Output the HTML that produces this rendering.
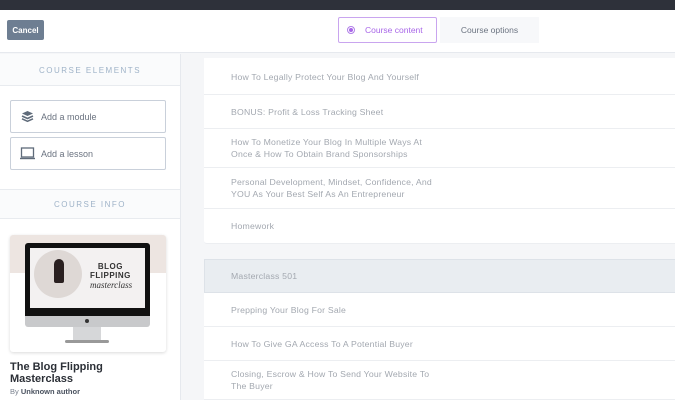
<!DOCTYPE html>
<html><head><meta charset="utf-8"><style>
*{box-sizing:border-box;margin:0;padding:0}
body{width:675px;height:400px;overflow:hidden;font-family:"Liberation Sans",sans-serif;background:#f5f6f8;position:relative}
.a{position:absolute}
.row{position:absolute;left:204px;width:471px;background:#fff;border-bottom:1px solid #eceef1;font-size:8.7px;color:#a3a8b0;padding-left:27px;display:flex;align-items:center;line-height:12px;letter-spacing:.2px}
.btn{position:absolute;left:10px;width:156px;height:33px;border:1px solid #c9d0da;border-radius:2px;background:#fff;font-size:9px;color:#6b7380;display:flex;align-items:center;padding-left:30px}
.hd{position:absolute;left:0;width:180px;font-size:8px;letter-spacing:1.5px;color:#9fb3c8;text-align:center}
</style></head><body>
<div class="a" style="left:0;top:0;width:675px;height:10px;background:#2e313a"></div>
<div class="a" style="left:0;top:10px;width:675px;height:43px;background:#fff;border-bottom:1px solid #e6e9ee"></div>
<div class="a" style="left:7px;top:20px;width:37px;height:20px;background:#6e7e92;border-radius:2px;color:#fff;font-size:8px;font-weight:bold;display:flex;align-items:center;justify-content:center">Cancel</div>
<div class="a" style="left:338px;top:17px;width:99px;height:26px;border:1px solid #c9a5ef;border-radius:2px;color:#a866e8;font-size:8.5px;display:flex;align-items:center;padding-left:26px">Course content</div>
<div class="a" style="left:347px;top:26px;width:8px;height:8px;border:1px solid #b07ee8;border-radius:50%"></div>
<div class="a" style="left:349px;top:28px;width:4px;height:4px;background:#a866e8;border-radius:50%"></div>
<div class="a" style="left:440px;top:17px;width:99px;height:26px;background:#f7f8fa;color:#6b7380;font-size:8.5px;display:flex;align-items:center;justify-content:center">Course options</div>

<div class="a" style="left:0;top:54px;width:181px;height:346px;background:#fff;border-right:1px solid #e6e9ee"></div>
<div class="a" style="left:0;top:54px;width:180px;height:32px;background:#fafbfc;border-bottom:1px solid #e8ebef"></div>
<div class="hd" style="top:66px">COURSE ELEMENTS</div>
<div class="btn" style="top:100px">Add a module</div>
<svg class="a" style="left:21px;top:110px" width="13" height="13" viewBox="0 0 13 13"><path d="M6.5 1L12 3.5 6.5 6 1 3.5z" fill="#5f6b7a"/><path d="M1 6l5.5 2.5L12 6" stroke="#5f6b7a" stroke-width="1.6" fill="none"/><path d="M1 8.8l5.5 2.5L12 8.8" stroke="#5f6b7a" stroke-width="1.6" fill="none"/></svg>
<div class="btn" style="top:137px">Add a lesson</div>
<svg class="a" style="left:20px;top:147px" width="15" height="13" viewBox="0 0 15 13"><rect x="1.5" y="1" width="12" height="9" fill="none" stroke="#5f6b7a" stroke-width="1.3"/><path d="M0 11.5h15" stroke="#5f6b7a" stroke-width="1.4"/></svg>
<div class="a" style="left:0;top:189px;width:180px;height:30px;background:#fafbfc;border-top:1px solid #e8ebef;border-bottom:1px solid #e8ebef"></div>
<div class="hd" style="top:200px">COURSE INFO</div>

<div class="a" style="left:10px;top:235px;width:156px;height:117px;background:#fff;border-radius:3px;box-shadow:0 1px 3px rgba(0,0,0,.15);overflow:hidden">
<div class="a" style="left:0;top:0;width:156px;height:38px;background:#ede5e1"></div>
<div class="a" style="left:15px;top:8px;width:125px;height:73px;background:#111;border-radius:3px 3px 0 0"></div>
<div class="a" style="left:20px;top:13px;width:115px;height:60px;background:#f3f1f1"></div>
<div class="a" style="left:24px;top:15px;width:48px;height:48px;border-radius:50%;background:#ded8d5"></div>
<div class="a" style="left:44px;top:24px;width:10px;height:24px;background:#2a2020;border-radius:5px 5px 2px 2px"></div>
<div class="a" style="left:80px;top:27px;font-size:8px;font-weight:bold;color:#333;line-height:9px;text-align:center;letter-spacing:.5px">BLOG<br>FLIPPING</div>
<div class="a" style="left:80px;top:45px;font-size:9px;font-style:italic;font-family:'Liberation Serif',serif;color:#333">masterclass</div>
<div class="a" style="left:15px;top:81px;width:125px;height:11px;background:#c8c9cb;border-radius:0 0 3px 3px"></div>
<div class="a" style="left:75px;top:84px;width:4px;height:4px;background:#333;border-radius:50%"></div>
<div class="a" style="left:63px;top:92px;width:28px;height:14px;background:#d6d7d9"></div>
<div class="a" style="left:55px;top:105px;width:44px;height:3px;background:#999;border-radius:2px"></div>
</div>
<div class="a" style="left:10px;top:361px;font-size:11px;font-weight:bold;color:#2b2f36;line-height:12px">The Blog Flipping<br>Masterclass</div>
<div class="a" style="left:10px;top:387px;font-size:7.5px;color:#7b8390">By <b style="color:#4b5360">Unknown author</b></div>

<div class="a" style="left:204px;top:58px;width:471px;height:2px;background:#fff"></div>
<div class="row" style="top:60px;height:35px">How To Legally Protect Your Blog And Yourself</div>
<div class="row" style="top:95px;height:34px">BONUS: Profit &amp; Loss Tracking Sheet</div>
<div class="row" style="top:129px;height:39px">How To Monetize Your Blog In Multiple Ways At<br>Once &amp; How To Obtain Brand Sponsorships</div>
<div class="row" style="top:168px;height:41px">Personal Development, Mindset, Confidence, And<br>YOU As Your Best Self As An Entrepreneur</div>
<div class="row" style="top:209px;height:35px;border-radius:0 0 0 3px">Homework</div>
<div class="row" style="top:259px;height:34px;background:#e9edf1;border:1px solid #dde2e8;border-right:none;padding-left:26px">Masterclass 501</div>
<div class="row" style="top:293px;height:34px">Prepping Your Blog For Sale</div>
<div class="row" style="top:327px;height:34px">How To Give GA Access To A Potential Buyer</div>
<div class="row" style="top:361px;height:39px">Closing, Escrow &amp; How To Send Your Website To<br>The Buyer</div>
</body></html>
